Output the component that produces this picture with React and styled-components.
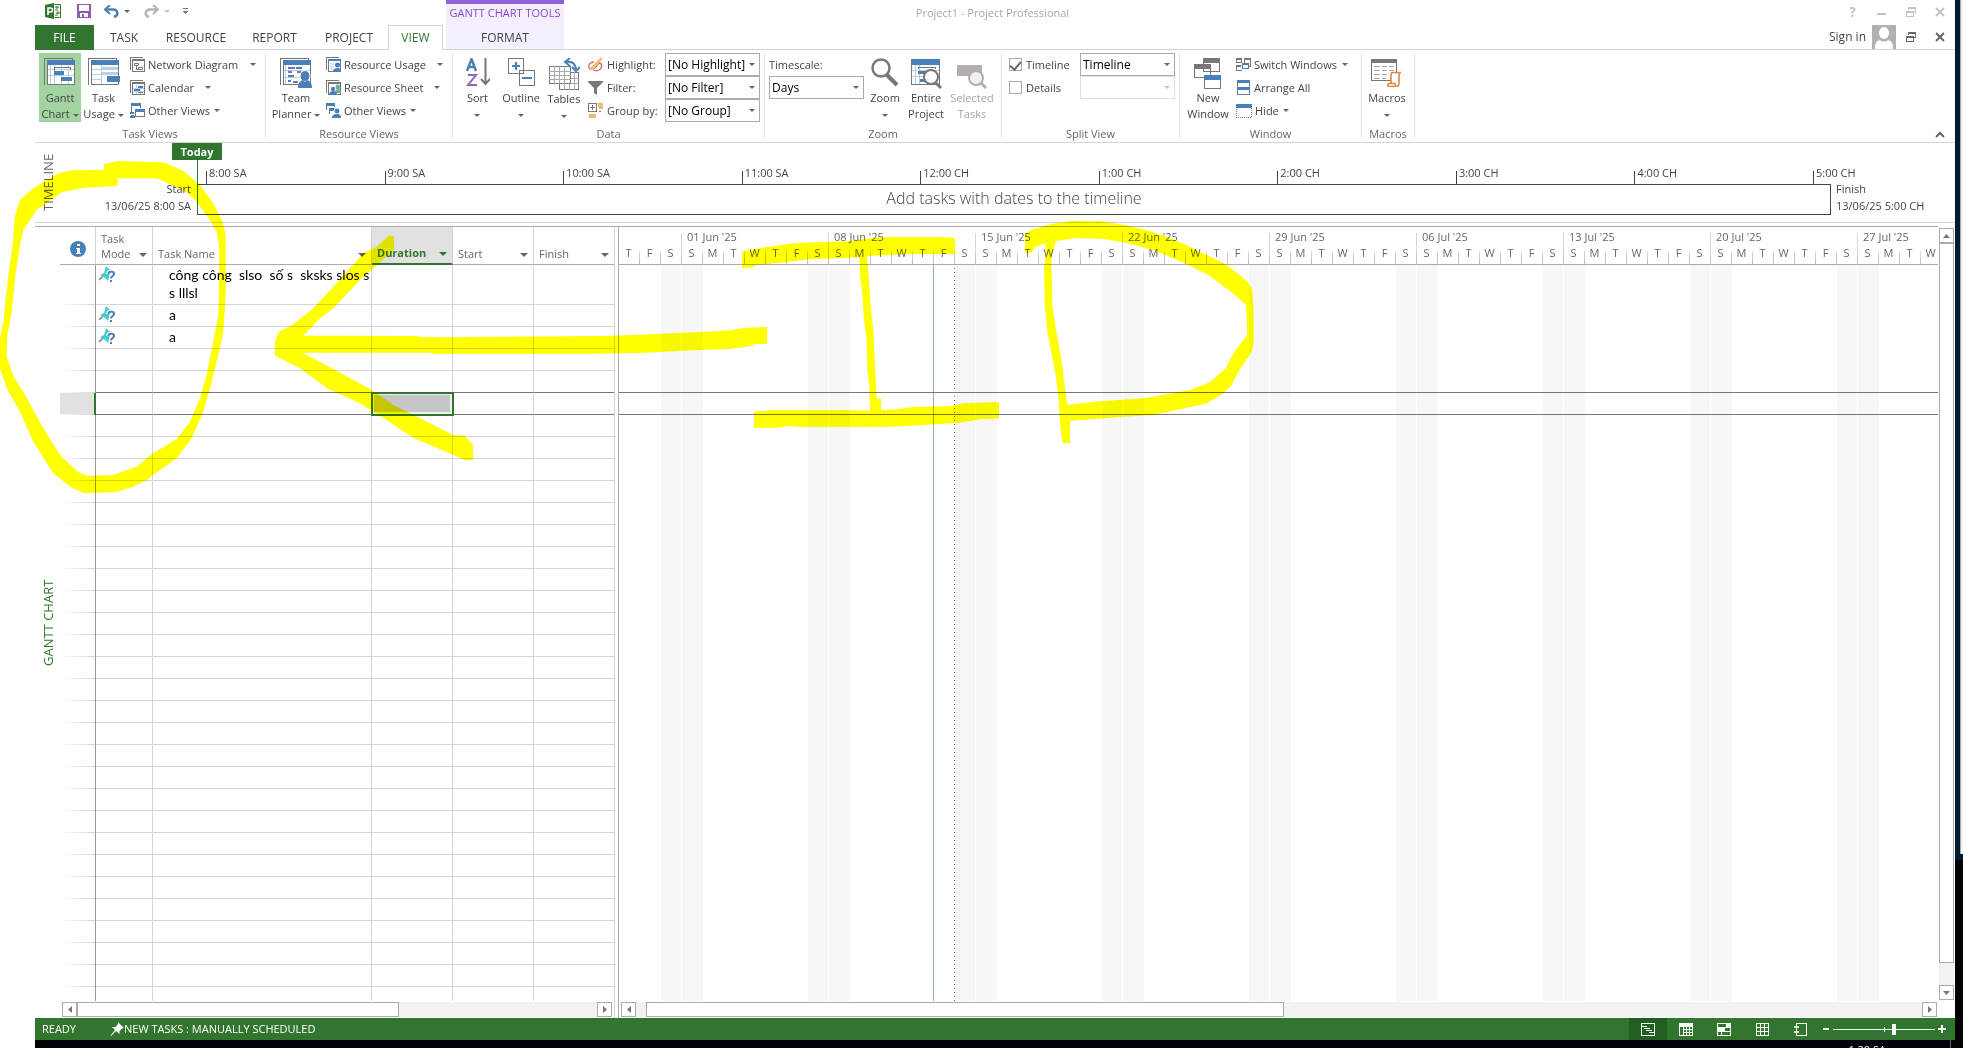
import styled, { createGlobalStyle, css } from "styled-components";

const GREEN = "#31752f";
const BLUE = "#4a80b9";
const PALE = "#b9cfe4";
const GRAY = "#777";
const PURPLE = "#9164b8";

const DAYS = ["T", "F", "S", "S", "M", "T", "W"];
const DAY_COUNT = 63;
const WEEKS = [
  "01 Jun '25",
  "08 Jun '25",
  "15 Jun '25",
  "22 Jun '25",
  "29 Jun '25",
  "06 Jul '25",
  "13 Jul '25",
  "20 Jul '25",
  "27 Jul '25",
];
const HOURS = ["8:00 SA", "9:00 SA", "10:00 SA", "11:00 SA", "12:00 CH", "1:00 CH", "2:00 CH", "3:00 CH", "4:00 CH", "5:00 CH"];
const TASKS = ["công công  slso  số s  sksks slos s s lllsl", "a", "a"];
const ROW_COUNT = 33;
const SELECTED_ROW = 5;

export default function App() {
  return (
    <Desktop>
      <GlobalStyle />
      <Window>
        <TitleBar />
        <Ribbon />
        <Timeline />
        <GanttView />
        <StatusBar />
      </Window>
      <Behind>
        <div />
      </Behind>
      <Taskbar>
        <span>1:20 SA</span>
      </Taskbar>
      <Marker />
    </Desktop>
  );
}

function TitleBar() {
  return (
    <Header>
      <HeaderLeft>
        <QuickAccess>
          <IconButton $w={30} aria-label="Project"><ProjectLogo /></IconButton>
          <IconButton $w={31} aria-label="Save"><SaveIcon /></IconButton>
          <IconButton $w={24} aria-label="Undo"><UndoIcon color={BLUE} /></IconButton>
          <IconButton $w={8} $gap={8} aria-label="Undo list"><Caret /></IconButton>
          <IconButton $w={24} aria-label="Redo"><UndoIcon color="#b5b5b5" flip /></IconButton>
          <IconButton $w={8} aria-label="Redo list"><Caret $dim /></IconButton>
          <IconButton $w={29} aria-label="Customize">
            <svg width="5" height="6" shapeRendering="crispEdges">
              <path d="M0 0h5v1H0zM0 3h5L2.5 6z" fill={GRAY} />
            </svg>
          </IconButton>
        </QuickAccess>
        <Tabs>
          <Tab $w={59} $file>FILE</Tab>
          <Tab $w={60}>TASK</Tab>
          <Tab $w={84}>RESOURCE</Tab>
          <Tab $w={73}>REPORT</Tab>
          <Tab $w={76}>PROJECT</Tab>
          <Tab $w={55} $active>VIEW</Tab>
        </Tabs>
      </HeaderLeft>
      <ContextTab>
        <span>GANTT CHART TOOLS</span>
        <Tab $w={118}>FORMAT</Tab>
      </ContextTab>
      <Title>Project1 - Project Professional</Title>
      <WindowControls>
        <ControlRow $dim>
          <IconButton $w={29} aria-label="Help"><b>?</b></IconButton>
          <IconButton $w={29} aria-label="Minimize">
            <svg width="9" height="8"><path d="M0 5h9v2H0z" fill="#c3c3c3" /></svg>
          </IconButton>
          <IconButton $w={29} aria-label="Restore"><RestoreIcon color="#c3c3c3" /></IconButton>
          <IconButton $w={29} aria-label="Close"><CloseIcon color="#c3c3c3" /></IconButton>
        </ControlRow>
        <ControlRow>
          <SignIn href="#signin">Sign in</SignIn>
          <svg width="24" height="24">
            <path d="M0 0h24v24H0z" fill="#b1b1b1" />
            <ellipse cx="12" cy="8" rx="5" ry="6" fill="#fff" />
            <path d="M3 24c0-6 1-8 5-9 2 2 6 2 8 0 4 1 5 3 5 9z" fill="#fff" />
          </svg>
          <IconButton $w={29} aria-label="Restore document"><RestoreIcon color="#666" /></IconButton>
          <IconButton $w={29} aria-label="Close document"><CloseIcon color="#666" /></IconButton>
        </ControlRow>
      </WindowControls>
    </Header>
  );
}

function Ribbon() {
  return (
    <RibbonBar>
      <Group title="Task Views" w={231}>
        <BigButton $w={42} $pressed>
          <GanttIcon />
          <span>Gantt<br />Chart <Caret /></span>
        </BigButton>
        <BigButton $w={45}>
          <UsageIcon />
          <span>Task<br />Usage <Caret /></span>
        </BigButton>
        <SmallColumn>
          <SmallButton><NetworkIcon />Network Diagram<Caret $gap={12} /></SmallButton>
          <SmallButton><CalendarIcon />Calendar<Caret $gap={11} /></SmallButton>
          <SmallButton><OtherViewsIcon />Other Views<Caret $gap={4} /></SmallButton>
        </SmallColumn>
      </Group>
      <Group title="Resource Views" w={187}>
        <BigButton $w={52}>
          <TeamIcon />
          <span>Team<br />Planner <Caret /></span>
        </BigButton>
        <SmallColumn>
          <SmallButton><ResourceUsageIcon />Resource Usage<Caret $gap={11} /></SmallButton>
          <SmallButton><ResourceSheetIcon />Resource Sheet<Caret $gap={11} /></SmallButton>
          <SmallButton><ResourceOtherIcon />Other Views<Caret $gap={4} /></SmallButton>
        </SmallColumn>
      </Group>
      <Group title="Data" w={312}>
        <BigButton $w={41}>
          <SortIcon />
          <span>Sort<br /><Caret /></span>
        </BigButton>
        <BigButton $w={46}>
          <OutlineIcon />
          <span>Outline<br /><Caret /></span>
        </BigButton>
        <BigButton $w={40}>
          <TablesIcon />
          <span>Tables<br /><Caret /></span>
        </BigButton>
        <SmallColumn>
          <Field $w={77} htmlFor="highlight"><HighlightIcon />Highlight:</Field>
          <Field $w={77} htmlFor="filter"><FilterIcon />Filter:</Field>
          <Field $w={77} htmlFor="group"><GroupIcon />Group by:</Field>
        </SmallColumn>
        <div>
          <DropDown id="highlight" value="[No Highlight]" />
          <DropDown id="filter" value="[No Filter]" />
          <DropDown id="group" value="[No Group]" />
        </div>
      </Group>
      <Group title="Zoom" w={237}>
        <div>
          <Field htmlFor="timescale">Timescale:</Field>
          <DropDown id="timescale" value="Days" />
        </div>
        <Gap />
        <BigButton $w={34}>
          <ZoomIcon />
          <span>Zoom<br /><Caret /></span>
        </BigButton>
        <BigButton $w={48}>
          <EntireIcon />
          <span>Entire<br />Project</span>
        </BigButton>
        <BigButton $w={44} disabled>
          <SelectedIcon />
          <span>Selected<br />Tasks</span>
        </BigButton>
      </Group>
      <Group title="Split View" w={178}>
        <CheckColumn>
          <Field><CheckBox type="checkbox" defaultChecked />Timeline</Field>
          <Field><CheckBox type="checkbox" />Details</Field>
        </CheckColumn>
        <div>
          <DropDown label="Timeline view" value="Timeline" />
          <DropDown label="Details view" value="" disabled />
        </div>
      </Group>
      <Group title="Window" w={182}>
        <BigButton $w={48}>
          <NewWindowIcon />
          <span>New<br />Window</span>
        </BigButton>
        <SmallColumn>
          <SmallButton><SwitchIcon />Switch Windows<Caret $gap={5} /></SmallButton>
          <SmallButton><ArrangeIcon />Arrange All</SmallButton>
          <SmallButton><HideIcon />Hide<Caret $gap={4} /></SmallButton>
        </SmallColumn>
      </Group>
      <Group title="Macros" w={53}>
        <BigButton $w={42}>
          <MacrosIcon />
          <span>Macros<br /><Caret /></span>
        </BigButton>
      </Group>
      <Collapse aria-label="Collapse the ribbon">
        <svg width="10" height="7"><path d="M1 6l4-4 4 4" fill="none" stroke="#666" strokeWidth="2" /></svg>
      </Collapse>
    </RibbonBar>
  );
}

function Group({ title, w, children }) {
  return (
    <RibbonGroup $w={w}>
      <GroupBody>{children}</GroupBody>
      <GroupTitle>{title}</GroupTitle>
    </RibbonGroup>
  );
}

function DropDown({ id, label, value, disabled }) {
  return (
    <SelectBox $disabled={disabled}>
      <select id={id} aria-label={label} disabled={disabled} defaultValue={value}>
        <option>{value}</option>
      </select>
      <Caret $dim={disabled} />
    </SelectBox>
  );
}

function Timeline() {
  return (
    <TimelinePane>
      <SideLabel>TIMELINE</SideLabel>
      <StartLabel>
        Start<br />13/06/25 8:00 SA
      </StartLabel>
      <Track>
        <Hours>
          {HOURS.map((hour) => (
            <span key={hour}>{hour}</span>
          ))}
        </Hours>
        <TrackBar>Add tasks with dates to the timeline</TrackBar>
        <Today>Today</Today>
      </Track>
      <FinishLabel>
        Finish<br />13/06/25 5:00 CH
      </FinishLabel>
    </TimelinePane>
  );
}

function GanttView() {
  return (
    <GanttPane>
      <SideLabel $green>GANTT CHART</SideLabel>
      <SheetPane>
        <Clip>
          <Sheet>
            <colgroup>
              <col width="36" />
              <col width="57" />
              <col width="219" />
              <col width="81" />
              <col width="81" />
              <col width="80" />
            </colgroup>
            <thead>
              <tr>
                <HeadCell aria-label="Indicators">
                  <svg width="16" height="16">
                    <circle cx="8" cy="8" r="8" fill={BLUE} />
                    <path d="M7 3h3v2H7zM6 7h4v5h1v1H6v-1h1V8H6z" fill="#fff" />
                  </svg>
                </HeadCell>
                <HeadCell><HeadText>Task<br />Mode<SortMark /></HeadText></HeadCell>
                <HeadCell><HeadText>Task Name<SortMark /></HeadText></HeadCell>
                <HeadCell $selected><HeadText>Duration<SortMark $green /></HeadText></HeadCell>
                <HeadCell><HeadText>Start<SortMark /></HeadText></HeadCell>
                <HeadCell><HeadText>Finish<SortMark /></HeadText></HeadCell>
              </tr>
            </thead>
            <tbody>
              {Array.from({ length: ROW_COUNT }, (_, i) => (
                <Row key={i} $tall={i === 0} $dark={i === SELECTED_ROW || i === SELECTED_ROW - 1}>
                  <RowHead $selected={i === SELECTED_ROW} />
                  <td>{TASKS[i] && <ModeIcon />}</td>
                  <NameCell>{TASKS[i]}</NameCell>
                  <Cell $selected={i === SELECTED_ROW} />
                  <td />
                  <td />
                </Row>
              ))}
            </tbody>
          </Sheet>
        </Clip>
        <HScroll>
          <ScrollButton aria-label="Scroll left"><Arrow dir="left" /></ScrollButton>
          <ScrollTrack><Thumb $size="62%" /></ScrollTrack>
          <ScrollButton aria-label="Scroll right"><Arrow dir="right" /></ScrollButton>
        </HScroll>
      </SheetPane>
      <ChartPane>
        <Clip>
          <WeekRow>
            {WEEKS.map((week) => (
              <span key={week}>{week}</span>
            ))}
          </WeekRow>
          <DayRow>
            {Array.from({ length: DAY_COUNT }, (_, i) => (
              <DayHead key={i} $major={i % 7 === 2}>{DAYS[i % 7]}</DayHead>
            ))}
          </DayRow>
          <ChartBody>
            {Array.from({ length: DAY_COUNT }, (_, i) => (
              <DayColumn key={i} $saturday={i % 7 === 2} $sunday={i % 7 === 3} $now={i === 14} $status={i === 15} />
            ))}
            <SelectedBand />
          </ChartBody>
        </Clip>
        <HScroll $wide>
          <ScrollButton aria-label="Scroll left"><Arrow dir="left" /></ScrollButton>
          <ScrollTrack $lead={10}><Thumb $size="50%" /></ScrollTrack>
          <ScrollButton aria-label="Scroll right"><Arrow dir="right" /></ScrollButton>
        </HScroll>
      </ChartPane>
      <VScroll>
        <ScrollButton aria-label="Scroll up"><Arrow dir="up" /></ScrollButton>
        <ScrollTrack><Thumb $vertical $size="97%" /></ScrollTrack>
        <ScrollButton aria-label="Scroll down"><Arrow dir="down" /></ScrollButton>
      </VScroll>
    </GanttPane>
  );
}

function StatusBar() {
  return (
    <Status>
      <Ready>READY</Ready>
      <PinIcon />
      <span>NEW TASKS : MANUALLY SCHEDULED</span>
      <ViewButtons>
        <ViewButton $active aria-label="Gantt Chart">
          <svg width="14" height="13" shapeRendering="crispEdges">
            <path d="M0 0h14v13H0z M1 1v11h12V1z M1 3h5v1H1z M3 5h6v1H3z M5 7h6v1H5z M8 9h5v1H8z" fill="#fff" fillRule="evenodd" />
          </svg>
        </ViewButton>
        <ViewButton aria-label="Task Usage">
          <svg width="14" height="13" shapeRendering="crispEdges">
            <path d="M0 0h14v13H0z M1 4v8h3V4z M5 4v2h2V4z M8 4v2h2V4z M11 4v2h2V4z M5 7v2h2V7z M8 7v2h2V7z M11 7v2h2V7z M5 10v2h2v-2z M8 10v2h2v-2z M11 10v2h2v-2z" fill="#fff" fillRule="evenodd" />
          </svg>
        </ViewButton>
        <ViewButton aria-label="Team Planner">
          <svg width="14" height="13" shapeRendering="crispEdges">
            <path d="M0 0h14v13H0z M1 1v3h8V1z M8 5v3h5V5z M1 9v3h3V9z M5 9v3h8V9z" fill="#fff" fillRule="evenodd" />
          </svg>
        </ViewButton>
        <ViewButton aria-label="Resource Sheet">
          <svg width="13" height="13" shapeRendering="crispEdges">
            <path d="M0 0h13v13H0z M1 1v3h3V1z M5 1v3h3V1z M9 1v3h3V1z M1 5v3h3V5z M5 5v3h3V5z M9 5v3h3V5z M1 9v3h3V9z M5 9v3h3V9z M9 9v3h3V9z" fill="#fff" fillRule="evenodd" />
          </svg>
        </ViewButton>
        <ViewButton aria-label="Report">
          <svg width="13" height="13" shapeRendering="crispEdges">
            <path d="M2.5 3V.5h10v12h-10V10M2.5 5v3" fill="none" stroke="#fff" />
            <path d="M0 3h5v2H0zM0 8h5v2H0z" fill="#d5e5d5" />
          </svg>
        </ViewButton>
      </ViewButtons>
      <ZoomButton aria-label="Zoom out"><svg width="6" height="2"><path d="M0 0h6v2H0z" fill="#fff" /></svg></ZoomButton>
      <ZoomSlider type="range" min="0" max="100" defaultValue="60" aria-label="Zoom" />
      <ZoomButton aria-label="Zoom in"><svg width="8" height="8"><path d="M3 0h2v3h3v2H5v3H3V5H0V3h3z" fill="#fff" /></svg></ZoomButton>
    </Status>
  );
}

/* Highlighter strokes lying over the whole window */
function Marker() {
  return (
    <MarkerLayer viewBox="0 0 1260 500" width="1260" height="500" fill="#ff0" fillRule="evenodd" aria-hidden="true">
      <g transform="translate(0 135) scale(.33333)">
        <path d="M312 88L353 78 490 82 550 108 600 150 640 205 668 262 677 300 677 480 670 590 655 660 635 740 610 830 575 910 530 970 480 1005 440 1035 400 1055 345 1072 250 1074 215 1058 160 1015 100 920 60 830 20 760 0 700 0 610 10 560 25 420 38 330 45 240 60 195 100 160 175 115 220 106 312 104z M353 130L470 130 520 152 560 172 590 200 630 255 650 290 658 340 657 470 655 540 640 620 620 720 600 790 570 860 530 912 455 958 410 995 340 1020 260 1022 235 1012 180 960 130 880 75 780 40 722 20 665 22 600 35 530 45 430 60 330 70 285 110 225 185 172 250 158 353 152z" />
        <path d="M1166 303L1182 303 1182 345 1120 400 1085 430 1000 520 960 550 910 602 1258 603 1258 607 1440 606 1810 603 1920 599 2015 595 2124 590 2190 586 2238 578 2301 576 2301 626 2270 627 2240 635 2185 642 2080 646 1937 653 1790 656 1296 656 1296 653 905 653 960 680 1110 762 1180 810 1230 835 1360 900 1393 902 1419 930 1419 975 1395 975 1240 908 1160 855 1080 805 985 762 900 700 825 662 825 620 835 592 880 568 940 520 1000 455 1090 355 1130 335z" />
      </g>
      <g transform="translate(480 140) scale(.33333)">
        <path d="M786 335L856 322 940 310 1000 307 1110 304 1170 295 1225 291 1380 291 1425 294 1425 342 1290 342 1160 348 1165 395 1172 500 1180 570 1184 660 1188 740 1190 775 1203 777 1203 810 1250 808 1300 801 1410 799 1450 790 1557 786 1557 835 1500 838 1440 848 1380 852 1234 860 965 861 925 858 890 863 822 863 822 815 873 810 1086 810 1170 812 1168 735 1162 690 1160 600 1152 540 1147 460 1140 405 1138 352 1080 355 985 358 900 368 830 375 812 383 786 383z" />
      </g>
      <g transform="translate(980 140) scale(.33333)">
        <path d="M135 280L160 268 210 253 275 243 360 244 430 254 500 270 560 290 620 316 740 374 800 422 816 445 821 515 821 610 815 635 775 695 755 735 728 762 680 790 630 802 520 825 430 830 270 843 270 909 248 909 240 850 237 790 228 710 212 625 203 585 195 500 192 380 198 345 196 310 165 322 155 338 135 338z M228 303L290 294 370 297 440 308 520 330 620 372 690 408 765 465 798 495 802 585 760 640 737 685 690 727 630 750 530 768 490 775 360 784 262 795 255 745 245 665 230 580 217 500 214 350z" />
      </g>
    </MarkerLayer>
  );
}

/* Icons */

function ProjectLogo() {
  return (
    <svg width="16" height="16">
      <path d="M0 2l9-2v16l-9-2z" fill={GREEN} />
      <path d="M9.500 1.500h6v13h-6" fill="#fff" stroke={GREEN} />
      <path d="M10 4h4M10 7h3M11 10h4M10 12h3M12 3v3M13 8v3" stroke={GREEN} />
      <path d="M3 12V5h2.500a2 2 0 010 4H3" fill="none" stroke="#fff" strokeWidth="1.600" />
    </svg>
  );
}

function SaveIcon() {
  return (
    <svg width="14" height="14" shapeRendering="crispEdges">
      <path d="M0 0h14v14H0z M2 1v6h10V1z M3 9v4h2v-3h2v3h4V9z" fill="#8a5bab" fillRule="evenodd" />
    </svg>
  );
}

function UndoIcon({ color, flip }) {
  return (
    <svg width="15" height="13">
      <g transform={flip ? "translate(15 0) scale(-1 1)" : undefined} fill="none" stroke={color} strokeWidth="2">
        <path d="M6 0L1 4.500 6 9" />
        <path d="M2 4.500h7c5 0 6 6 1 7.500" strokeWidth="2.500" />
      </g>
    </svg>
  );
}

function RestoreIcon({ color }) {
  return (
    <svg width="10" height="10" shapeRendering="crispEdges">
      <path d="M2 3V0h8v6H8V5h1V2H3v1z M0 4h8v6H0z M1 6v3h6V6z" fill={color} fillRule="evenodd" />
    </svg>
  );
}

function CloseIcon({ color }) {
  return (
    <svg width="10" height="10"><path d="M1 1l8 8M9 1L1 9" stroke={color} strokeWidth="2" /></svg>
  );
}

function BigSheet({ children }) {
  return (
    <svg width="32" height="28" shapeRendering="crispEdges">
      <path d="M.5 27V.5h28V2" fill="none" stroke={GRAY} />
      <path d="M3.500 2.500h27v24h-27z" fill="#fff" stroke={GRAY} />
      <path d="M3 2h28v5H3z" fill={BLUE} />
      {children}
    </svg>
  );
}

function GanttIcon() {
  return (
    <BigSheet>
      <path d="M6.500 7v19M10.500 7v19M17.500 7v19M24.500 7v19M4 11.500h26M4 17.500h26" stroke={PALE} />
      <path d="M10.500 12V9.500h16V12" fill="none" stroke={GRAY} />
      <path d="M10 13h10v4H10zM17 19h11v4H17z" fill={BLUE} />
    </BigSheet>
  );
}

function UsageIcon() {
  return (
    <BigSheet>
      <path d="M4 11.500h9M4 16.500h9M4 21.500h9M13.500 7v19" stroke={PALE} />
      <path d="M14 9h16v3H14zM14 14h16v3H14z" fill={PALE} />
      <rect x="19" y="18" width="13" height="6" fill={BLUE} />
    </BigSheet>
  );
}

function TeamIcon() {
  return (
    <svg width="32" height="31">
      <g shapeRendering="crispEdges">
        <path d="M.5 27V.5h28V2" fill="none" stroke={GRAY} />
        <path d="M3.500 2.500h27v24h-27z" fill="#fff" stroke={GRAY} />
        <path d="M3 2h28v5H3z" fill={BLUE} />
        <path d="M5.500 7v19M4 12.500h26M4 19.500h26" stroke={PALE} />
        <path d="M8 10h4M16 10h6M8 18h6M8 23h3" stroke={BLUE} strokeWidth="2" />
        <path d="M12 10h3M8 14h4M17 14h4M13 24h5" stroke={PURPLE} strokeWidth="2" />
      </g>
      <ellipse cx="25" cy="18" rx="5" ry="5.500" fill={BLUE} stroke="#fff" />
      <path d="M18 30c0-5 2-7 5-8l2 2 2-2c3 1 5 3 5 8z" fill={BLUE} />
    </svg>
  );
}

function SmallSheet({ head = GRAY, children }) {
  return (
    <svg width="15" height="15">
      <g shapeRendering="crispEdges">
        <path d="M.5 13V.5h12" fill="none" stroke={GRAY} />
        <path d="M2.500 2.500h12v12h-12z" fill="#fff" stroke={GRAY} />
        <path d="M2 2h13v2H2z" fill={head} />
      </g>
      {children}
    </svg>
  );
}

function NetworkIcon() {
  return (
    <SmallSheet>
      <path d="M4.500 6.500h4v2h-4zM8.500 10.500h4v2h-4zM6.500 9v3.500h2" fill="none" stroke={GRAY} />
    </SmallSheet>
  );
}

function CalendarIcon() {
  return (
    <SmallSheet>
      <path d="M3 8.500h11M3 11.500h11M6.500 5v9M10.500 5v9" stroke={PALE} />
      <path d="M8 6h5v2H8zM4 9h6v2H4zM8 12h5v1H8z" fill={BLUE} />
    </SmallSheet>
  );
}

function OtherViewsIcon() {
  return (
    <svg width="15" height="15" shapeRendering="crispEdges">
      <path d="M1.500 9V.5h9V5M.5 12.500h3" fill="none" stroke={GRAY} />
      <path d="M1 0h10v3H1z" fill={BLUE} />
      <path d="M5.500 6.500h9v7h-9z" fill="#fff" stroke={GRAY} />
      <path d="M5 6h10v3H5zM0 9h4v2H0zM0 13h5v2H0z" fill={BLUE} />
    </svg>
  );
}

function ResourceUsageIcon() {
  return (
    <SmallSheet head={BLUE}>
      <path d="M4 7h4M4 10h4M4 12h4" stroke={PALE} />
      <circle cx="11.500" cy="8" r="2.500" fill={BLUE} />
      <path d="M7 15c0-3 2-4 4.500-4s3.500 1 3.500 4z" fill={BLUE} />
    </SmallSheet>
  );
}

function ResourceSheetIcon() {
  return (
    <SmallSheet>
      <circle cx="12" cy="7" r="2.500" fill="#6fae93" />
      <path d="M9 13c0-3 1-4 3-4s3 1 3 4z" fill="#6fae93" />
      <circle cx="7" cy="9" r="2.200" fill={BLUE} />
      <path d="M3 15c0-3 2-4 4-4s4 1 4 4z" fill={BLUE} />
    </SmallSheet>
  );
}

function ResourceOtherIcon() {
  return (
    <svg width="15" height="15">
      <path d="M.5 7V.5h8V4M3.500 11V5" fill="none" stroke={GRAY} />
      <path d="M0 0h9v3H0zM3 5h9v3H3z" fill={BLUE} />
      <circle cx="11" cy="8" r="3" fill={BLUE} stroke="#fff" />
      <path d="M6 15c0-3 2-4 5-4s4 1 4 4z" fill={BLUE} />
    </svg>
  );
}

function SortIcon() {
  return (
    <svg width="24" height="29" fill="none" strokeWidth="2">
      <path d="M1 13L5.500 1 10 13M3 9h5" stroke={BLUE} strokeWidth="2.400" />
      <path d="M2 17h8L2 27h9" stroke={PURPLE} />
      <path d="M19.500 0v26M15 21l4.500 5 4.500-5" stroke={GRAY} />
    </svg>
  );
}

function OutlineIcon() {
  return (
    <svg width="27" height="29" shapeRendering="crispEdges">
      <path d="M.5.5h15v15H.5zM11.500 12.500h15v15h-15z" fill="#fff" stroke={GRAY} />
      <path d="M7 4h2v3h3v2H9v3H7V9H4V7h3zM14 19h10v2H14z" fill={BLUE} />
    </svg>
  );
}

function TablesIcon() {
  return (
    <svg width="31" height="33">
      <g shapeRendering="crispEdges" fill="#fff">
        <path d="M10.500 14.500h19v17h-19z" stroke={GRAY} />
        <path d="M10 20.500h20M10 25.500h20M15.500 14v18M20.500 14v18M25.500 14v18" stroke="#aaa" />
        <path d="M.5 8.500h21v17H.5z" stroke={GRAY} />
        <path d="M0 13.500h22M0 17.500h22M0 21.500h22M5.500 8v18M10.500 8v18M15.500 8v18" stroke="#aaa" />
      </g>
      <path d="M17 4c6-1 9 1 10 7M21 0l-5 4 5 4M23 9l4 4 4-4" fill="none" stroke={BLUE} strokeWidth="2" />
    </svg>
  );
}

function HighlightIcon() {
  return (
    <svg width="15" height="15" fill="none">
      <path d="M6 5C2 5 0 8 1 11c2 3 7 0 10-5 3 0 4 5 0 7-2 1-4 1-6 0" stroke="#d96a57" strokeWidth="1.300" />
      <path d="M13 0l2 2L5 12l-4 2 2-4z" fill="#efc17a" />
    </svg>
  );
}

function FilterIcon() {
  return (
    <svg width="15" height="15"><path d="M0 1h15v1L9 8v7l-3-2V8L0 2z" fill={GRAY} /></svg>
  );
}

function GroupIcon() {
  return (
    <svg width="15" height="15" shapeRendering="crispEdges">
      <path d="M.5.5h8v8h-8zM2 4.500h5M4.500 2v5" fill="none" stroke={GRAY} />
      <path d="M10 0h5v6h-4V4h-1zM1 11h7v4H1z" fill="#e8bd73" />
      <path d="M11 8h2v1h-2z" fill={GRAY} />
    </svg>
  );
}

function ZoomIcon() {
  return (
    <svg width="28" height="29" fill="none" stroke={GRAY}>
      <circle cx="10" cy="10" r="8.500" strokeWidth="2.500" />
      <path d="M16 17l10 10" strokeWidth="4" />
    </svg>
  );
}

function EntireIcon() {
  return (
    <svg width="31" height="31">
      <g shapeRendering="crispEdges">
        <path d="M.5 1.500h28v25H.5z" fill="#fff" stroke={GRAY} />
        <path d="M0 1h29v6H0z" fill={BLUE} />
        <path d="M4.500 7v19M8.500 7v19M1 12.500h27M1 18.500h27" stroke={PALE} />
        <path d="M7.500 11V9.500h17V11" fill="none" stroke={GRAY} />
        <path d="M7 13h9v3H7zM9 21h5v3H9z" fill={BLUE} />
      </g>
      <circle cx="20" cy="19" r="7" fill="#fff" stroke={GRAY} strokeWidth="2" />
      <path d="M25 25l5 5" stroke={GRAY} strokeWidth="3" />
    </svg>
  );
}

function SelectedIcon() {
  return (
    <svg width="30" height="31">
      <path d="M0 7h25v11H0z" fill="#b1adb1" />
      <circle cx="19" cy="20" r="7" fill="#f4eef4" stroke="#b1adb1" strokeWidth="2" />
      <path d="M24 25l5 5" stroke="#b1adb1" strokeWidth="3" />
    </svg>
  );
}

function NewWindowIcon() {
  return (
    <svg width="28" height="32" shapeRendering="crispEdges" fill="#fff" stroke={GRAY}>
      <path d="M9.500.5h16v13h-16zM.5 6.500h16v13H.5zM10.500 17.500h16v13h-16z" />
      <path d="M9 0h17v5H9zM0 6h17v5H0z" fill={GRAY} stroke="none" />
      <path d="M10 17h17v5H10z" fill={BLUE} stroke="none" />
    </svg>
  );
}

function SwitchIcon() {
  return (
    <svg width="15" height="14" shapeRendering="crispEdges" fill="none" stroke={GRAY}>
      <path d="M.5.5h5v4h-5zM8.500 5V.5h6v8H13M.5 7.500h4M.5 8v4.500h5" strokeWidth="1" />
      <path d="M0 1h6M8 1h7M0 8h5" strokeWidth="2" />
      <path d="M6.500 5.500h6v5h-6z" stroke={BLUE} />
      <path d="M6 6h7" stroke={BLUE} strokeWidth="2" />
    </svg>
  );
}

function ArrangeIcon() {
  return (
    <svg width="15" height="15" shapeRendering="crispEdges">
      <path d="M1.500.5h12v14h-12z" fill="#fff" stroke={GRAY} />
      <path d="M1 0h13v3H1zM1 7h13v3H1z" fill={BLUE} />
    </svg>
  );
}

function HideIcon() {
  return (
    <svg width="16" height="14" shapeRendering="crispEdges">
      <path d="M0 0h16v4H0z" fill={BLUE} />
      <path d="M.5 5v8.500h15V4" fill="none" stroke={GRAY} strokeDasharray="1 1" />
    </svg>
  );
}

function MacrosIcon() {
  return (
    <svg width="32" height="29">
      <g shapeRendering="crispEdges">
        <path d="M.5 1.500h25v21H.5z" fill="#fff" stroke={GRAY} />
        <path d="M0 1h26v4H0z" fill={GRAY} />
        <path d="M3 8.500h6M11 8.500h5M18 8.500h5M3 12.500h6M11 12.500h5M18 12.500h5M3 16.500h6M11 16.500h5M3 20.500h6M11 20.500h4" stroke="#aaa" />
      </g>
      <path d="M20 25V17c0-2 1-2.500 2-2.500h8c-1 0-2 1-2 3V25c0 2-1 3.500-3 3.500h-7c-1.500 0-1.500-3 0-3h6c0 2 0 3 1 3" fill="#fff" stroke="#e6873c" strokeWidth="1.600" />
    </svg>
  );
}

function ModeIcon() {
  return (
    <svg width="17" height="17">
      <path d="M0 14l6-6" stroke={GRAY} strokeWidth="1.500" />
      <path d="M7 0l3 3 3 1-3 3 .5 2-1.500 6-4-4-4-2 4-2z" fill="#44cbd0" />
      <path d="M9 8c0-3 6-3 6 0 0 2-3 2-3 4" fill="none" stroke="#fff" strokeWidth="4" />
      <path d="M9.500 8c0-3 5.500-3 5.500 0 0 2-3 2-3 4.500" fill="none" stroke={BLUE} strokeWidth="2" />
      <path d="M11 14h2v2h-2z" fill={BLUE} />
    </svg>
  );
}

function PinIcon() {
  return (
    <svg width="14" height="14" fill="#fff">
      <path d="M8 0l6 6-2 .5-2.500 2.500V12L6 9l-5 5-.5-.5 4.500-5.500-3-3h3.500L8 2z" />
    </svg>
  );
}

const ARROWS = {
  left: "M9 3v7L5 6.500z",
  right: "M5 3v7l4-3.500z",
  up: "M3 9h7L6.500 5z",
  down: "M3 5h7L6.500 9z",
};

function Arrow({ dir }) {
  return (
    <svg width="13" height="13"><path d={ARROWS[dir]} fill={GRAY} /></svg>
  );
}

/* Shell */

const GlobalStyle = createGlobalStyle`
  * {
    box-sizing: border-box;
  }

  body {
    margin: 0;
    background: #fff;
    color: #444;
    font: 11px/16px "Open Sans", "Noto Sans", sans-serif;
  }

  button, select, input {
    margin: 0;
    padding: 0;
    border: 0;
    background: none;
    color: inherit;
    font: inherit;
  }

  svg {
    display: block;
    flex: none;
  }
`;

const Desktop = styled.div`
  position: relative;
  display: grid;
  grid-template: minmax(0, 1fr) 8px / minmax(0, 1fr) 8px;
  height: 100vh;
  padding-left: 35px;
  overflow: hidden;
`;

const Window = styled.div`
  display: flex;
  flex-direction: column;
  background: #fff;
`;

const Behind = styled.div`
  background: linear-gradient(#001a35, #001a35 860px, #000 860px);

  div {
    width: 3px;
    height: 854px;
    margin-left: 5px;
    background: #f4f4f4;
    border-left: 1px solid #aaa;
  }
`;

const Taskbar = styled.div`
  grid-column: 1 / -1;
  display: flex;
  justify-content: flex-end;
  overflow: hidden;
  background: #000207;
  color: #fff;

  span {
    height: 8px;
    padding: 2px 64px 0 0;
    margin-right: 12px;
    border-right: 1px solid #666;
  }
`;

const MarkerLayer = styled.svg`
  position: absolute;
  top: 0;
  left: 0;
  mix-blend-mode: multiply;
  pointer-events: none;
`;

/* Title bar and tabs */

const Caret = styled.i`
  display: inline-block;
  flex: none;
  margin-left: ${({ $gap }) => $gap || 0}px;
  border: 3px solid transparent;
  border-top-color: ${({ $dim }) => ($dim ? "#c3c3c3" : "#666")};
  border-bottom: 0;
  vertical-align: middle;
`;

const Header = styled.header`
  display: flex;
  height: 50px;
  background: linear-gradient(#d4d4d4, #d4d4d4) 0 100% / 100% 1px no-repeat;
`;

const HeaderLeft = styled.div`
  display: flex;
  flex-direction: column;
`;

const QuickAccess = styled.div`
  display: flex;
  height: 25px;
  padding: 0 0 3px 3px;
`;

const IconButton = styled.button`
  display: flex;
  align-items: center;
  justify-content: center;
  width: ${({ $w }) => $w}px;
  margin-right: ${({ $gap }) => $gap || 0}px;
`;

const Tabs = styled.nav`
  display: flex;
`;

const Tab = styled.button`
  flex: none;
  width: ${({ $w }) => $w}px;
  height: 25px;
  font-size: 12px;

  ${({ $file }) => $file && css`
    background: ${GREEN};
    color: #fff;
  `}

  ${({ $active }) => $active && css`
    margin-left: 1px;
    border: 1px solid #d4d4d4;
    border-bottom: 0;
    background: #fff;
    color: ${GREEN};
  `}
`;

const ContextTab = styled.div`
  display: flex;
  flex-direction: column;
  align-items: center;
  height: 49px;
  margin-left: 3px;
  border-top: 4px solid #9261d6;
  background: #f5effc;

  span {
    flex: none;
    height: 21px;
    line-height: 18px;
    color: #8849cf;
  }
`;

const Title = styled.h1`
  flex: 1;
  margin: 0;
  padding-right: 526px;
  color: #a8a8a8;
  font-size: 11px;
  font-weight: 400;
  line-height: 25px;
  text-align: center;
`;

const WindowControls = styled.div`
  display: flex;
  flex-direction: column;
  align-items: flex-end;
  margin: 0 1px 0 -118px;
`;

const ControlRow = styled.div`
  display: flex;
  align-items: center;
  height: ${({ $dim }) => ($dim ? 24 : 25)}px;
  color: ${({ $dim }) => ($dim ? "#c3c3c3" : "#444")};

  b {
    font-size: 14px;
  }
`;

const SignIn = styled.a`
  padding-right: 6px;
  color: inherit;
  font-size: 12px;
  text-decoration: none;
`;

/* Ribbon */

const RibbonBar = styled.section`
  display: flex;
  height: 93px;
  padding-top: 3px;
  border-bottom: 1px solid #d4d4d4;
`;

const RibbonGroup = styled.div`
  display: flex;
  flex-direction: column;
  width: ${({ $w }) => $w}px;
  height: 85px;
  padding-left: 4px;
  border-right: 1px solid #e1e1e1;
`;

const GroupBody = styled.div`
  display: flex;
  flex: none;
  height: 69px;
`;

const GroupTitle = styled.div`
  padding: 4px 4px 0 0;
  color: #666;
  text-align: center;
`;

const BigButton = styled.button`
  display: flex;
  flex-direction: column;
  align-items: center;
  width: ${({ $w }) => $w}px;
  height: 69px;
  padding-top: 5px;
  background: ${({ $pressed }) => ($pressed ? "#a2d3a0" : "none")};
  white-space: nowrap;

  &:disabled {
    color: #a5a5a5;
  }

  svg {
    margin-bottom: auto;
  }
`;

const SmallColumn = styled.div`
  display: flex;
  flex-direction: column;
  margin-left: 4px;
`;

const SmallButton = styled.button`
  display: flex;
  align-items: center;
  height: 23px;
  white-space: nowrap;

  svg {
    margin-right: 3px;
  }
`;

const Field = styled.label`
  display: flex;
  align-items: center;
  gap: 4px;
  width: ${({ $w }) => ($w ? `${$w}px` : "auto")};
  height: 23px;
`;

const SelectBox = styled.div`
  display: flex;
  align-items: center;
  width: 95px;
  height: 23px;
  padding-right: 4px;
  border: 1px solid ${({ $disabled }) => ($disabled ? "#e1e1e1" : "#ababab")};
  background: #fff;

  select {
    flex: 1;
    min-width: 0;
    height: 21px;
    padding-left: 2px;
    appearance: none;
    color: #000;
    font-size: 12px;
  }
`;

const Gap = styled.div`
  width: 4px;
`;

const CheckColumn = styled.div`
  width: 74px;
  padding-left: 3px;
`;

const CheckBox = styled.input`
  display: grid;
  place-items: center;
  width: 13px;
  height: 13px;
  appearance: none;
  border: 1px solid #ababab;
  background: #fff;

  &:checked::before {
    content: "";
    width: 5px;
    height: 9px;
    margin-bottom: 2px;
    border: solid #666;
    border-width: 0 2px 2px 0;
    transform: rotate(40deg);
  }
`;

const Collapse = styled.button`
  align-self: flex-end;
  margin: 0 10px 4px auto;
`;

/* Timeline */

const SideLabel = styled.div`
  width: 25px;
  padding-right: 3px;
  color: ${({ $green }) => ($green ? GREEN : "#666")};
  font-size: 13px;
  line-height: 20px;
  text-align: center;
  writing-mode: vertical-rl;
  transform: rotate(180deg);
  white-space: nowrap;
`;

const TimelinePane = styled.section`
  display: flex;
  height: 80px;
  border-bottom: 1px solid #d4d4d4;
`;

const StartLabel = styled.div`
  width: 137px;
  padding: 37px 6px 0 0;
  line-height: 17px;
  text-align: right;
`;

const FinishLabel = styled.div`
  width: 124px;
  padding: 37px 0 0 5px;
  line-height: 17px;
`;

const Track = styled.div`
  position: relative;
  flex: 1;
  padding-top: 28px;
`;

const Hours = styled.div`
  display: grid;
  grid-template-columns: repeat(9, minmax(0, 1fr)) 18px;
  padding-left: 9px;

  span {
    height: 13px;
    padding-left: 2px;
    border-left: 1px solid #444;
    line-height: 4px;
    white-space: nowrap;
  }
`;

const TrackBar = styled.div`
  height: 31px;
  border: 1px solid #444;
  border-left-color: ${GREEN};
  font-size: 16px;
  font-weight: 300;
  line-height: 27px;
  text-align: center;
`;

const Today = styled.div`
  position: absolute;
  top: 0;
  left: -25px;
  width: 50px;
  height: 17px;
  background: ${GREEN};
  color: #fff;
  font-weight: 700;
  line-height: 17px;
  text-align: center;

  &::after {
    content: "";
    position: absolute;
    top: 17px;
    left: 25px;
    height: 24px;
    border-left: 1px solid ${GREEN};
  }
`;

/* Sheet and chart */

const GanttPane = styled.main`
  display: flex;
  flex: 1;
  min-height: 0;
  margin-top: 3px;
  background: linear-gradient(#ababab, #ababab) 0 0 / calc(100% - 17px) 1px no-repeat;
  padding-top: 1px;
`;

const SheetPane = styled.div`
  display: flex;
  flex-direction: column;
  width: 555px;
  margin-right: 3px;
  border-right: 1px solid #d4d4d4;
`;

const Clip = styled.div`
  display: flex;
  flex: 1;
  flex-direction: column;
  min-height: 0;
  margin-bottom: 1px;
  overflow: hidden;
`;

const Sheet = styled.table`
  width: 100%;
  table-layout: fixed;
  border-collapse: separate;
  border-spacing: 0;

  th, td {
    padding: 0;
    border: solid #d4d4d4;
    border-width: 0 1px 1px 0;
    vertical-align: top;
  }

  tr > :last-child {
    border-right: 0;
  }

  tbody svg {
    margin: 1px 0 0 3px;
  }
`;

const HeadCell = styled.th`
  height: 38px;
  color: #666;
  font-weight: 400;
  text-align: left;

  ${Sheet} & {
    border-bottom-color: #ababab;
    vertical-align: bottom;
  }

  > svg {
    margin: 0 0 7px 10px;
  }

  ${({ $selected }) => $selected && css`
    background: #e1e1e1;
    color: ${GREEN};
    font-weight: 700;

    ${Sheet} & {
      border-bottom: 2px solid ${GREEN};
    }
  `}
`;

const HeadText = styled.div`
  display: flow-root;
  padding: 0 5px 3px;
  line-height: 15px;
`;

const SortMark = styled.i`
  float: right;
  margin-top: 7px;
  border: 4px solid transparent;
  border-top-color: ${({ $green }) => ($green ? GREEN : "#666")};
  border-bottom: 0;
`;

const Row = styled.tr`
  height: ${({ $tall }) => ($tall ? 40 : 22)}px;

  ${({ $dark }) => $dark && css`
    && td {
      border-bottom-color: ${GRAY};
    }
  `}
`;

const RowHead = styled.td`
  background: linear-gradient(90deg, #fff, #d4d4d4) 0 100% / 100% 1px no-repeat
    ${({ $selected }) => ($selected ? "#e1e1e1" : "#fff")};

  ${Sheet} ${Row} & {
    border-bottom: 0;
    border-right: ${({ $selected }) => ($selected ? `2px solid ${GREEN}` : "1px solid #999")};
  }
`;

const NameCell = styled.td`
  color: #000;
  font-family: Lato, "Open Sans", sans-serif;
  font-size: 14px;
  line-height: 18px;
  white-space: pre-wrap;

  ${Sheet} & {
    padding: 1px 0 0 16px;
  }
`;

const Cell = styled.td`
  ${({ $selected }) => $selected && css`
    outline: 2px solid ${GREEN};
    outline-offset: -1px;
    background: #c6c6c6;
    box-shadow: inset 0 0 0 2px #eee;
  `}
`;

const ChartPane = styled.div`
  display: flex;
  flex: 1;
  flex-direction: column;
  min-width: 0;
  border-left: 1px solid #ababab;
`;

const WeekRow = styled.div`
  display: flex;
  flex: none;
  height: 18px;
  padding: 6px 0 0 62px;
  color: #666;

  span {
    flex: none;
    width: 147px;
    padding-left: 5px;
    border-left: 1px solid #d4d4d4;
    line-height: 8px;
  }
`;

const DayRow = styled.div`
  display: flex;
  flex: none;
  height: 20px;
  border-bottom: 1px solid #ababab;
  color: #666;
`;

const DayHead = styled.span`
  flex: none;
  width: 21px;
  padding-right: 2px;
  background: linear-gradient(#ddd, #bbb) 100% 100% / 1px ${({ $major }) => ($major ? 19 : 13)}px no-repeat;
  line-height: 15px;
  text-align: center;
`;

const ChartBody = styled.div`
  position: relative;
  display: flex;
  flex: 1;
`;

const DayColumn = styled.div`
  flex: none;
  width: 21px;
  background: ${({ $saturday, $sunday }) => ($saturday || $sunday ? "#f7f7f7" : "none")};
  ${({ $saturday }) => $saturday && "border-right: 1px solid #fff;"}
  ${({ $now }) => $now && "border-right: 1px solid #8fba8e;"}
  ${({ $status }) => $status && css`
    background: repeating-linear-gradient(#fff 0 3px, #777 3px 4px) 100% 0 / 1px 100% no-repeat;
  `}
`;

const SelectedBand = styled.div`
  position: absolute;
  top: 127px;
  right: 0;
  left: 0;
  height: 23px;
  border: solid ${GRAY};
  border-width: 1px 0;
`;

const HScroll = styled.div`
  display: flex;
  height: 15px;
  margin: 0 ${({ $wide }) => ($wide ? 1 : 2)}px 1px 2px;
`;

const VScroll = styled.div`
  display: flex;
  flex-direction: column;
  width: 15px;
  margin: 1px 1px 18px;
`;

const ScrollButton = styled.button`
  width: 15px;
  height: 15px;
  border: 1px solid #ababab;
  background: #fff;
`;

const ScrollTrack = styled.div`
  flex: 1;
  padding-left: ${({ $lead }) => $lead || 0}px;
  background: #f2f2f2;
`;

const Thumb = styled.div`
  width: ${({ $vertical, $size }) => ($vertical ? "15px" : $size)};
  height: ${({ $vertical, $size }) => ($vertical ? $size : "15px")};
  border: 1px solid #ababab;
  background: #fff;
`;

/* Status bar */

const Status = styled.footer`
  display: flex;
  align-items: center;
  height: 22px;
  padding: 0 6px 0 7px;
  background: ${GREEN};
  color: #fff;
`;

const Ready = styled.span`
  width: 68px;
`;

const ViewButtons = styled.div`
  display: flex;
  margin-left: auto;
`;

const ViewButton = styled.button`
  display: flex;
  align-items: center;
  justify-content: center;
  width: 38px;
  height: 22px;
  background: ${({ $active }) => ($active ? "#226022" : "none")};
`;

const ZoomButton = styled.button`
  display: flex;
  justify-content: center;
  width: 14px;
`;

const ZoomSlider = styled.input`
  width: 102px;
  height: 11px;
  appearance: none;
  background:
    linear-gradient(#fff, #fff) 50% 50% / 1px 5px no-repeat,
    linear-gradient(#fff, #fff) 0 50% / 100% 1px no-repeat;

  &::-webkit-slider-thumb {
    width: 4px;
    height: 11px;
    appearance: none;
    background: #fff;
  }
`;
